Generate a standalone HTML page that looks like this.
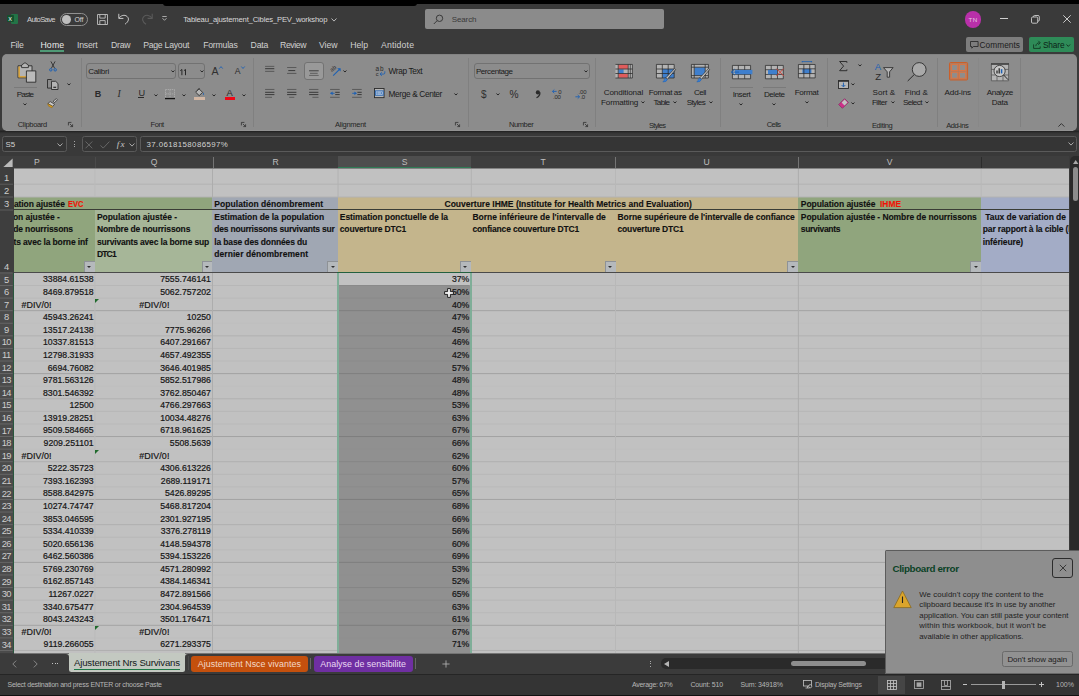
<!DOCTYPE html>
<html><head><meta charset="utf-8"><title>Excel</title>
<style>
*{box-sizing:border-box;margin:0;padding:0}
html,body{width:1079px;height:696px;overflow:hidden;background:#3a3a3a;font-family:"Liberation Sans",sans-serif;}
body{position:relative;color:#d6d6d6;font-size:8.5px}
.a{position:absolute}
.t{position:absolute;white-space:nowrap;line-height:1}
.b{-webkit-text-stroke:0.22px #151515}
svg{position:absolute;overflow:visible}
.cell{position:absolute;white-space:nowrap;font-size:8.6px;line-height:12.6px;color:#151515}
.rh{position:absolute;left:0;width:13px;text-align:center;font-size:9.4px;line-height:12.6px;color:#cdcdcd;letter-spacing:-0.55px;text-indent:-0.5px}
.hd{position:absolute;font-weight:bold;font-size:8.55px;line-height:12.6px;color:#111;white-space:nowrap;overflow:hidden;letter-spacing:-0.1px}
.fb{position:absolute;width:10.7px;height:10.9px;background:#b5b9bc;border-top:1px solid #8e9296;border-left:1px solid #8e9296}
.fb:after{content:"";position:absolute;left:2.6px;top:4px;border-left:2px solid transparent;border-right:2px solid transparent;border-top:2.5px solid #303030}
</style></head><body>

<div class="a" style="left:0px;top:0px;width:1079.00px;height:4.00px;background:#000;"></div>
<div class="a" style="left:163px;top:0px;width:254.00px;height:6.00px;background:#000;border-radius:0 0 3px 3px"></div>
<div class="a" style="left:10.5px;top:13.6px;width:7.10px;height:10.00px;background:#237447;border-radius:1px"></div>
<div class="a" style="left:7px;top:15.2px;width:6.60px;height:7.00px;background:#15502d;border-radius:1px"></div>
<div class="t" style="left:8.30px;top:17.00px;font-size:5.6px;color:#c9d6ce;font-weight:bold;">X</div>
<div class="t" style="left:27.00px;top:16.00px;font-size:7.6px;color:#d2d2d2;letter-spacing:-0.620px;">AutoSave</div>
<div class="a" style="left:60px;top:12.6px;width:28px;height:13px;border:1px solid #909090;border-radius:6.5px"></div>
<div class="a" style="left:62.2px;top:14.5px;width:9.2px;height:9.2px;border-radius:5px;background:#bebebe"></div>
<div class="t" style="left:74.50px;top:16.00px;font-size:7.0px;color:#d2d2d2;letter-spacing:-0.159px;">Off</div>
<svg style="left:97px;top:13.5px" width="11" height="11" viewBox="0 0 11 11" fill="none" stroke="#c0c0c0" stroke-width="0.9"><path d="M0.5 0.5h10v10H0.5z"/><path d="M2.8 0.5v3.6h5.4V0.5"/><path d="M2.8 10.5V6.6h5.4v3.9"/></svg>
<svg style="left:118px;top:13.2px" width="12" height="12" viewBox="0 0 12 12" fill="none" stroke="#c6c6c6" stroke-width="1.0"><path d="M0.8 0.8v4.6H5.4"/><path d="M1 5.2C3 2.2 6.6 1.4 9 3.4c2.4 2 1.8 5.2-2 7.8"/></svg>
<svg style="left:140.5px;top:13.2px" width="12" height="12" viewBox="0 0 12 12" fill="none" stroke="#5a5a5a" stroke-width="1.1"><path d="M11.2 0.8v4.6H6.6"/><path d="M11 5.2C9 2.2 5.4 1.4 3 3.4c-2.4 2-1.8 5.2 2 7.8"/></svg>
<svg style="left:162px;top:16.3px" width="5" height="5" viewBox="0 0 5 5" fill="none" stroke="#bdbdbd" stroke-width="0.85"><path d="M0.3 0.5h4.4"/><path d="M0.5 2.2L2.5 4.3 4.5 2.2"/></svg>
<div class="t" style="left:183.20px;top:16.00px;font-size:7.7px;color:#d8d8d8;letter-spacing:-0.189px;">Tableau_ajustement_Cibles_PEV_workshop</div>
<svg style="left:330.50px;top:17.80px" width="6" height="3.6" viewBox="0 0 6 3.6" fill="none" stroke="#cfcfcf" stroke-width="0.85"><path d="M0.5 0.5L3.0 3.1 5.5 0.5"/></svg>
<div class="a" style="left:425px;top:9px;width:239.30px;height:20.30px;background:#8b8b8b;border-radius:2px"></div>
<svg style="left:433px;top:13.6px" width="11" height="11" viewBox="0 0 11 11" fill="none" stroke="#3a3a3a" stroke-width="1"><circle cx="6.5" cy="4.3" r="3.2"/><path d="M4.2 6.6L0.8 10"/></svg>
<div class="t" style="left:451.70px;top:16.00px;font-size:8.0px;color:#3a3a3a;letter-spacing:-0.112px;">Search</div>
<div class="a" style="left:964.6px;top:11.2px;width:16.40px;height:16.40px;background:#b930a9;border-radius:9px"></div>
<div class="t" style="left:968.60px;top:17.00px;font-size:6.2px;color:#e3c5e0;letter-spacing:0.350px;">TN</div>
<div class="a" style="left:1000px;top:18px;width:8.00px;height:1.00px;background:#cfcfcf;"></div>
<svg style="left:1031px;top:15px" width="9" height="9" viewBox="0 0 9 9" fill="none" stroke="#cfcfcf" stroke-width="0.9"><rect x="0.5" y="2" width="6.2" height="6.2" rx="1.2"/><path d="M2.4 2V1.7q0-1.2 1.2-1.2H7q1.3 0 1.3 1.2V5q0 1.2-1.2 1.2"/></svg>
<svg style="left:1063px;top:15.3px" width="8" height="8" viewBox="0 0 8 8" fill="none" stroke="#dadada" stroke-width="0.9"><path d="M0.3 0.3l7.4 7.4M7.7 0.3L0.3 7.7"/></svg>
<div class="t" style="left:10.50px;top:41.00px;font-size:8.7px;color:#d0d0d0;letter-spacing:-0.233px;">File</div>
<div class="t" style="left:40.40px;top:41.00px;font-size:8.7px;color:#ececec;letter-spacing:0.204px;">Home</div>
<div class="t" style="left:77.00px;top:41.00px;font-size:8.7px;color:#d0d0d0;letter-spacing:-0.227px;">Insert</div>
<div class="t" style="left:111.00px;top:41.00px;font-size:8.7px;color:#d0d0d0;letter-spacing:-0.227px;">Draw</div>
<div class="t" style="left:143.20px;top:41.00px;font-size:8.7px;color:#d0d0d0;letter-spacing:-0.260px;">Page Layout</div>
<div class="t" style="left:203.20px;top:41.00px;font-size:8.7px;color:#d0d0d0;letter-spacing:-0.231px;">Formulas</div>
<div class="t" style="left:250.60px;top:41.00px;font-size:8.7px;color:#d0d0d0;letter-spacing:-0.186px;">Data</div>
<div class="t" style="left:280.00px;top:41.00px;font-size:8.7px;color:#d0d0d0;letter-spacing:-0.380px;">Review</div>
<div class="t" style="left:319.00px;top:41.00px;font-size:8.7px;color:#d0d0d0;letter-spacing:-0.029px;">View</div>
<div class="t" style="left:350.20px;top:41.00px;font-size:8.7px;color:#d0d0d0;letter-spacing:-0.025px;">Help</div>
<div class="t" style="left:381.00px;top:41.00px;font-size:8.7px;color:#d0d0d0;letter-spacing:0.158px;">Antidote</div>
<div class="a" style="left:40.4px;top:50.4px;width:24.00px;height:1.50px;background:#4f9a76;"></div>
<div class="a" style="left:966.3px;top:36.8px;width:57.20px;height:15.00px;background:#7d7d7d;border-radius:2px"></div>
<svg style="left:970.3px;top:40.8px" width="9" height="8" viewBox="0 0 9 8" fill="none" stroke="#222" stroke-width="0.8"><path d="M0.5 0.5h7.6v5H3.4L1.8 7.2V5.5H0.5z"/></svg>
<div class="t" style="left:979.60px;top:41.00px;font-size:8.3px;color:#1c1c1c;letter-spacing:0.039px;">Comments</div>
<div class="a" style="left:1029px;top:36.8px;width:45.00px;height:15.00px;background:#2e8b58;border-radius:2px"></div>
<svg style="left:1032.6px;top:40.2px" width="9" height="9" viewBox="0 0 9 9" fill="none" stroke="#0f2e1c" stroke-width="0.8"><path d="M0.6 4.4v4h6.6v-2"/><path d="M2.8 6.2c.2-2.4 1.8-3.4 3.8-3.4"/><path d="M5.3 0.8l2 2-2 2"/></svg>
<div class="t" style="left:1043.00px;top:41.00px;font-size:8.3px;color:#0c2417;letter-spacing:-0.160px;">Share</div>
<svg style="left:1066.30px;top:43.85px" width="4.6" height="2.9" viewBox="0 0 4.6 2.9" fill="none" stroke="#0c2417" stroke-width="0.8"><path d="M0.5 0.5L2.3 2.4 4.1 0.5"/></svg>
<div class="a" style="left:0px;top:130px;width:1079.00px;height:4.00px;background:#2e2e2e;"></div>
<div class="a" style="left:2px;top:54px;width:1074.60px;height:77.00px;background:#8c8c8c;border-radius:5px"></div>
<div class="a" style="left:6px;top:54px;width:1066.60px;height:1.00px;background:#838383;"></div>
<div class="a" style="left:6px;top:130px;width:1066.60px;height:1.00px;background:#929292;"></div>
<div class="a" style="left:80.9px;top:57.5px;width:1.00px;height:69.10px;background:#808080;"></div>
<div class="a" style="left:253.3px;top:57.5px;width:1.00px;height:69.10px;background:#808080;"></div>
<div class="a" style="left:467.7px;top:57.5px;width:1.00px;height:69.10px;background:#808080;"></div>
<div class="a" style="left:595.1px;top:57.5px;width:1.00px;height:69.10px;background:#808080;"></div>
<div class="a" style="left:720.1px;top:57.5px;width:1.00px;height:69.10px;background:#808080;"></div>
<div class="a" style="left:827.0px;top:57.5px;width:1.00px;height:69.10px;background:#808080;"></div>
<div class="a" style="left:937.2px;top:57.5px;width:1.00px;height:69.10px;background:#808080;"></div>
<div class="a" style="left:1019.9px;top:57.5px;width:1.00px;height:69.10px;background:#808080;"></div>
<div class="a" style="left:978px;top:57.5px;width:1.00px;height:69.10px;background:#888888;"></div>
<svg style="left:17px;top:61.5px" width="20" height="21" viewBox="0 0 20 21" ><path d="M1 3.8h14v12H1z" fill="#b4b4b4" stroke="#2a2a2a" stroke-width="0.9"/><path d="M2.1 4.6V14.9H9" fill="none" stroke="#e1a021" stroke-width="1.3"/><path d="M4.6 5.6V3L8 0.7 11.4 3v2.6z" fill="#b4b4b4" stroke="#2a2a2a" stroke-width="0.85"/><path d="M9.4 8.9h9.4v11.3H9.4z" fill="#bababa" stroke="#2a2a2a" stroke-width="0.9"/></svg>
<div class="a" style="left:14.1px;top:87.1px;width:22.70px;height:0.80px;background:#7a7a7a;"></div>
<div class="t" style="left:16.80px;top:91.00px;font-size:8.1px;color:#1b1b1b;letter-spacing:-0.851px;">Paste</div>
<svg style="left:23.05px;top:102.82px" width="3.9" height="2.55" viewBox="0 0 3.9 2.55" fill="none" stroke="#1f1f1f" stroke-width="0.95"><path d="M0.5 0.5L1.95 2.05 3.4 0.5"/></svg>
<svg style="left:48.6px;top:60.8px" width="8" height="11" viewBox="0 0 8 11" ><path d="M1.9 0.4L5.6 7.2M6.1 0.4L2.4 7.2" stroke="#2a2a2a" stroke-width="0.85" fill="none"/><circle cx="1.8" cy="8.8" r="1.25" fill="none" stroke="#1d61b4" stroke-width="1"/><circle cx="6.2" cy="8.8" r="1.25" fill="none" stroke="#1d61b4" stroke-width="1"/></svg>
<svg style="left:46.8px;top:78.8px" width="12" height="11" viewBox="0 0 12 11" ><path d="M4.4 1.2V0.5H0.5v8.6h3.6" fill="none" stroke="#2a2a2a" stroke-width="0.9"/><path d="M4.5 2.3h4.2l2.3 2.3v5.9H4.5z" fill="#b4b4b4" stroke="#2a2a2a" stroke-width="0.9"/><path d="M6.3 8.3h2.9" stroke="#2a2a2a" stroke-width="1.2"/></svg>
<svg style="left:66.95px;top:83.22px" width="3.9" height="2.55" viewBox="0 0 3.9 2.55" fill="none" stroke="#1f1f1f" stroke-width="0.95"><path d="M0.5 0.5L1.95 2.05 3.4 0.5"/></svg>
<svg style="left:47.4px;top:97.6px" width="11" height="10" viewBox="0 0 11 10" ><path d="M6.2 3.2L9.4 0.6l1 1.2L7.6 4.6z" fill="#c6c6c6" stroke="#2a2a2a" stroke-width="0.7"/><path d="M3.2 3.6l4.3 2.6-1.6 2.2L0.9 5.6z" fill="#c9c9c9" stroke="#2a2a2a" stroke-width="0.7"/><path d="M0.6 5.7l5.2 2.9-0.9 1.2L1.6 8.2z" fill="#e0a01f" stroke="#8a6414" stroke-width="0.5"/></svg>
<div class="t" style="left:17.80px;top:121.00px;font-size:7.5px;color:#252525;letter-spacing:-0.351px;">Clipboard</div>
<svg style="left:68.2px;top:122.3px" width="5" height="5" viewBox="0 0 5 5" fill="none" stroke="#2a2a2a" stroke-width="0.75"><path d="M0.4 3.4V0.4H3.4"/><path d="M1.9 1.9L4.5 4.5M4.6 2.3V4.6H2.3"/></svg>
<div class="a" style="left:86.4px;top:63.3px;width:89.80px;height:15.80px;background:transparent;border:1px solid #727272;border-radius:3px"></div>
<div class="t" style="left:88.20px;top:68.00px;font-size:8.0px;color:#1b1b1b;letter-spacing:-0.279px;">Calibri</div>
<svg style="left:170.65px;top:70.12px" width="3.9" height="2.55" viewBox="0 0 3.9 2.55" fill="none" stroke="#1f1f1f" stroke-width="0.95"><path d="M0.5 0.5L1.95 2.05 3.4 0.5"/></svg>
<div class="a" style="left:178.2px;top:63.3px;width:27.30px;height:15.80px;background:transparent;border:1px solid #727272;border-radius:3px"></div>
<svg style="left:180.4px;top:68.6px" width="7" height="6.4" viewBox="0 0 7 6.4" ><path d="M0.3 1.7L1.9 0.5V6.2M3.9 1.7L5.5 0.5V6.2" fill="none" stroke="#1b1b1b" stroke-width="0.9"/></svg>
<svg style="left:199.95px;top:70.12px" width="3.9" height="2.55" viewBox="0 0 3.9 2.55" fill="none" stroke="#1f1f1f" stroke-width="0.95"><path d="M0.5 0.5L1.95 2.05 3.4 0.5"/></svg>
<div class="t" style="left:211.60px;top:66.00px;font-size:10.6px;color:#303030;letter-spacing:0.522px;">A</div>
<svg style="left:219.2px;top:65.6px" width="4" height="3" viewBox="0 0 4 3" ><path d="M0.3 2.6L2 0.6 3.7 2.6" fill="none" stroke="#1d61b4" stroke-width="0.9"/></svg>
<div class="t" style="left:234.80px;top:67.00px;font-size:8.6px;color:#2a2a2a;letter-spacing:0.666px;">A</div>
<svg style="left:241.2px;top:65.9px" width="4" height="3" viewBox="0 0 4 3" ><path d="M0.3 0.5L2 2.5 3.7 0.5" fill="none" stroke="#1d61b4" stroke-width="0.9"/></svg>
<div class="t" style="left:94.70px;top:90.00px;font-size:9.0px;color:#2a2a2a;letter-spacing:-1.300px;font-weight:bold;">B</div>
<div class="t" style="left:117.40px;top:89.00px;font-size:9.6px;color:#2a2a2a;letter-spacing:0.997px;font-family:'Liberation Serif',serif;font-style:italic;">I</div>
<div class="t" style="left:138.40px;top:89.00px;font-size:9.2px;color:#2a2a2a;letter-spacing:-0.841px;">U</div>
<div class="a" style="left:138.2px;top:97.3px;width:6.20px;height:0.80px;background:#2a2a2a;"></div>
<svg style="left:153.95px;top:93.72px" width="3.9" height="2.55" viewBox="0 0 3.9 2.55" fill="none" stroke="#1f1f1f" stroke-width="0.95"><path d="M0.5 0.5L1.95 2.05 3.4 0.5"/></svg>
<svg style="left:165px;top:88.6px" width="10" height="10.4" viewBox="0 0 10 10.4" ><path d="M0.5 0.5h9M0.5 4.9h9M0.5 0.5v8.6M5 0.5v8.6M9.5 0.5v8.6" stroke="#a9a9a9" stroke-width="1" stroke-dasharray="1.4 0.7" fill="none"/><path d="M0 9.6h10" stroke="#111" stroke-width="1.3"/></svg>
<svg style="left:182.35px;top:93.52px" width="3.9" height="2.55" viewBox="0 0 3.9 2.55" fill="none" stroke="#1f1f1f" stroke-width="0.95"><path d="M0.5 0.5L1.95 2.05 3.4 0.5"/></svg>
<svg style="left:195.4px;top:88.4px" width="10" height="9" viewBox="0 0 10 9" ><path d="M3.8 0.6L7.6 4.4 4.2 7.6 0.7 4.2z" fill="#b4b4b4" stroke="#2a2a2a" stroke-width="0.85"/><path d="M2.2 2.6L4.6 0.4" stroke="#2a2a2a" stroke-width="0.8"/><path d="M8.4 4.6q1.2 1.8 0 2.6-1.2-.8 0-2.6z" fill="#1d61b4"/></svg>
<div class="a" style="left:194.3px;top:97.1px;width:10.80px;height:2.60px;background:#d2b6a3;"></div>
<svg style="left:211.65px;top:93.52px" width="3.9" height="2.55" viewBox="0 0 3.9 2.55" fill="none" stroke="#1f1f1f" stroke-width="0.95"><path d="M0.5 0.5L1.95 2.05 3.4 0.5"/></svg>
<div class="t" style="left:226.60px;top:88.00px;font-size:9.4px;color:#2a2a2a;letter-spacing:0.934px;">A</div>
<div class="a" style="left:225px;top:97.1px;width:10.20px;height:2.60px;background:#ef0716;"></div>
<svg style="left:242.35px;top:93.52px" width="3.9" height="2.55" viewBox="0 0 3.9 2.55" fill="none" stroke="#1f1f1f" stroke-width="0.95"><path d="M0.5 0.5L1.95 2.05 3.4 0.5"/></svg>
<div class="t" style="left:150.60px;top:121.00px;font-size:7.5px;color:#252525;letter-spacing:-0.472px;">Font</div>
<svg style="left:241.0px;top:122.3px" width="5" height="5" viewBox="0 0 5 5" fill="none" stroke="#2a2a2a" stroke-width="0.75"><path d="M0.4 3.4V0.4H3.4"/><path d="M1.9 1.9L4.5 4.5M4.6 2.3V4.6H2.3"/></svg>
<svg style="left:265px;top:64px" width="12" height="12" viewBox="0 0 12 12" fill="none"><path d="M0.1 2.4H9.3" stroke="#323232" stroke-width="0.55"/><path d="M0.1 4.7H9.3" stroke="#000000" stroke-width="0.6"/><path d="M0.1 7.35H9.3" stroke="#2a2a2a" stroke-width="0.55"/></svg>
<svg style="left:287.2px;top:64px" width="12" height="12" viewBox="0 0 12 12" fill="none"><path d="M0.1 3.5H9.4" stroke="#323232" stroke-width="0.55"/><path d="M1.3 6.6H8.2" stroke="#000000" stroke-width="0.6"/><path d="M0.1 9.4H9.4" stroke="#2a2a2a" stroke-width="0.55"/></svg>
<div class="a" style="left:303.8px;top:62.3px;width:20.20px;height:17.40px;background:#999999;border:1px solid #727272;border-radius:3px"></div>
<svg style="left:309.3px;top:64px" width="12" height="12" viewBox="0 0 12 12" fill="none"><path d="M0.1 6.8H9.7" stroke="#000000" stroke-width="0.6"/><path d="M1 9.3H8.7" stroke="#2a2a2a" stroke-width="0.55"/><path d="M0.1 11.4H9.7" stroke="#323232" stroke-width="0.55"/></svg>
<svg style="left:329.6px;top:64.6px" width="12" height="12" viewBox="0 0 12 12" ><text x="0.3" y="5.6" font-family="Liberation Sans" font-size="5.6" fill="#2a2a2a" transform="rotate(-38 3 4)">ab</text><path d="M3.2 10.6L10 3.8" stroke="#1d61b4" stroke-width="1.1"/><path d="M7.2 3.2h3.4v3.4z" fill="#1d61b4"/></svg>
<svg style="left:343.45px;top:69.82px" width="3.9" height="2.55" viewBox="0 0 3.9 2.55" fill="none" stroke="#1f1f1f" stroke-width="0.95"><path d="M0.5 0.5L1.95 2.05 3.4 0.5"/></svg>
<svg style="left:265.1px;top:86px" width="12" height="12" viewBox="0 0 12 12" fill="none"><path d="M0.1 3.45H9.4" stroke="#323232" stroke-width="0.55"/><path d="M0.1 6.3H9.4" stroke="#000000" stroke-width="0.6"/><path d="M0.1 8.6H9.4" stroke="#000000" stroke-width="0.6"/><path d="M0.1 11.3H7" stroke="#323232" stroke-width="0.55"/></svg>
<svg style="left:287.2px;top:86px" width="12" height="12" viewBox="0 0 12 12" fill="none"><path d="M0.1 3.45H9.4" stroke="#323232" stroke-width="0.55"/><path d="M0.1 6.3H9.4" stroke="#000000" stroke-width="0.6"/><path d="M0.1 8.6H9.4" stroke="#000000" stroke-width="0.6"/><path d="M2.2 11.3H7.3" stroke="#323232" stroke-width="0.55"/></svg>
<svg style="left:309.3px;top:86px" width="12" height="12" viewBox="0 0 12 12" fill="none"><path d="M0.1 3.45H9.4" stroke="#323232" stroke-width="0.55"/><path d="M0.1 6.3H9.4" stroke="#000000" stroke-width="0.6"/><path d="M0.1 8.6H9.4" stroke="#000000" stroke-width="0.6"/><path d="M3.4 11.3H9.5" stroke="#323232" stroke-width="0.55"/></svg>
<svg style="left:330px;top:86px" width="10" height="12" viewBox="0 0 10 12" fill="none"><path d="M0.1 3.45H9.7M0.1 11.3H9.7" stroke="#323232" stroke-width="0.55"/><path d="M5.2 6.3H9.7M5.2 8.6H9.7" stroke="#000000" stroke-width="0.6"/><path d="M0.4 7.3H4.6" stroke="#1d61b4" stroke-width="0.9"/><path d="M0.2 7.3L2.6 5.4V9.2z" fill="#1d61b4"/></svg>
<svg style="left:352.3px;top:86px" width="10" height="12" viewBox="0 0 10 12" fill="none"><path d="M0.1 3.45H9.7M0.1 11.3H9.7" stroke="#323232" stroke-width="0.55"/><path d="M5.4 6.3H9.7M5.4 8.6H9.7" stroke="#000000" stroke-width="0.6"/><path d="M0.2 7.3H4.4" stroke="#1d61b4" stroke-width="0.9"/><path d="M4.8 7.3L2.4 5.4V9.2z" fill="#1d61b4"/></svg>
<div class="t" style="left:375.40px;top:66.00px;font-size:6.4px;color:#2a2a2a;letter-spacing:1.091px;">ab</div>
<div class="t" style="left:375.80px;top:72.00px;font-size:5.6px;color:#2a2a2a;">c</div>
<svg style="left:378.6px;top:71.4px" width="7" height="5" viewBox="0 0 7 5" ><path d="M5.8 0.3v1.6q0 1.2-1.3 1.2H1.2" fill="none" stroke="#1d61b4" stroke-width="0.9"/><path d="M2.8 1.4L1 3.1 2.8 4.8" fill="none" stroke="#1d61b4" stroke-width="0.9"/></svg>
<div class="t" style="left:388.50px;top:67.00px;font-size:8.3px;color:#1b1b1b;letter-spacing:-0.381px;">Wrap Text</div>
<svg style="left:374px;top:88px" width="11" height="10" viewBox="0 0 11 10" ><rect x="0.45" y="0.45" width="9.6" height="9.2" fill="#b6b6b6" stroke="#2a2a2a" stroke-width="0.9"/><rect x="1.3" y="2.9" width="7.9" height="4.3" fill="#c3cede" stroke="#1d61b4" stroke-width="0.9"/><path d="M2.6 5.05H7.9M3.6 4.1L2.6 5.05 3.6 6M6.9 4.1L7.9 5.05 6.9 6" stroke="#1d61b4" stroke-width="0.6" fill="none"/></svg>
<div class="t" style="left:388.50px;top:90.00px;font-size:8.3px;color:#1b1b1b;letter-spacing:-0.360px;">Merge &amp; Center</div>
<svg style="left:453.95px;top:92.52px" width="3.9" height="2.55" viewBox="0 0 3.9 2.55" fill="none" stroke="#1f1f1f" stroke-width="0.95"><path d="M0.5 0.5L1.95 2.05 3.4 0.5"/></svg>
<div class="t" style="left:335.00px;top:121.00px;font-size:7.5px;color:#252525;letter-spacing:-0.270px;">Alignment</div>
<svg style="left:455.2px;top:122.3px" width="5" height="5" viewBox="0 0 5 5" fill="none" stroke="#2a2a2a" stroke-width="0.75"><path d="M0.4 3.4V0.4H3.4"/><path d="M1.9 1.9L4.5 4.5M4.6 2.3V4.6H2.3"/></svg>
<div class="a" style="left:474.1px;top:63.3px;width:115.90px;height:15.70px;background:transparent;border:1px solid #727272;border-radius:3px"></div>
<div class="t" style="left:475.90px;top:68.00px;font-size:8.0px;color:#1b1b1b;letter-spacing:-0.425px;">Percentage</div>
<svg style="left:584.25px;top:70.32px" width="3.9" height="2.55" viewBox="0 0 3.9 2.55" fill="none" stroke="#1f1f1f" stroke-width="0.95"><path d="M0.5 0.5L1.95 2.05 3.4 0.5"/></svg>
<div class="t" style="left:481.00px;top:90.00px;font-size:10.0px;color:#303030;letter-spacing:-0.163px;">$</div>
<svg style="left:496.35px;top:93.32px" width="3.9" height="2.55" viewBox="0 0 3.9 2.55" fill="none" stroke="#1f1f1f" stroke-width="0.95"><path d="M0.5 0.5L1.95 2.05 3.4 0.5"/></svg>
<div class="t" style="left:509.60px;top:90.00px;font-size:10.2px;color:#2a2a2a;letter-spacing:1.137px;">%</div>
<svg style="left:534.5px;top:90px" width="6" height="9" viewBox="0 0 6 9" ><circle cx="2.9" cy="2.4" r="2.1" fill="#2a2a2a"/><path d="M4.9 2.2q.4 3.6-3.4 5.6" fill="none" stroke="#2a2a2a" stroke-width="1.2"/></svg>
<svg style="left:552.2px;top:89.2px" width="11" height="11" viewBox="0 0 11 11" ><path d="M0.6 2.4H4.6M0.4 2.4L2.3 0.6M0.4 2.4L2.3 4.2" stroke="#1d61b4" stroke-width="0.9" fill="none"/><text x="6.2" y="4.6" font-family="Liberation Sans" font-size="6" fill="#2a2a2a">0</text><text x="1.0" y="10" font-family="Liberation Sans" font-size="6" fill="#2a2a2a" letter-spacing="-0.2">.00</text></svg>
<svg style="left:574.6px;top:89.2px" width="11" height="11" viewBox="0 0 11 11" ><path d="M0.4 7.8H4.4M4.6 7.8L2.7 6M4.6 7.8L2.7 9.6" stroke="#1d61b4" stroke-width="0.9" fill="none"/><text x="3.6" y="4.6" font-family="Liberation Sans" font-size="6" fill="#2a2a2a" letter-spacing="-0.2">.00</text><text x="5.4" y="10" font-family="Liberation Sans" font-size="6" fill="#2a2a2a" letter-spacing="-0.2">.0</text></svg>
<div class="t" style="left:508.90px;top:121.00px;font-size:7.5px;color:#252525;letter-spacing:-0.377px;">Number</div>
<svg style="left:582.6px;top:122.3px" width="5" height="5" viewBox="0 0 5 5" fill="none" stroke="#2a2a2a" stroke-width="0.75"><path d="M0.4 3.4V0.4H3.4"/><path d="M1.9 1.9L4.5 4.5M4.6 2.3V4.6H2.3"/></svg>
<svg style="left:615px;top:64.4px" width="18" height="14.5" viewBox="0 0 18 14.5" fill="none"><rect x="0.4" y="0.4" width="17" height="13.6" fill="#b4b4b4"/><rect x="3.4" y="0.6" width="9.6" height="4.3" fill="#df5c5c"/><rect x="3.4" y="5.4" width="5.2" height="4" fill="#3f7fcd"/><rect x="3.4" y="9.8" width="9.4" height="4" fill="#df5c5c"/><path d="M0.4 0.4H17.4M0.4 5H17.4M0.4 9.5H17.4M0.4 14H17.4" stroke="#2a2a2a" stroke-width="0.75"/><path d="M3.2 0.4V14M13.2 0.4V14M17.4 0.4V14M15.3 0.4V14" stroke="#2a2a2a" stroke-width="0.7"/></svg>
<div class="t" style="left:603.70px;top:89.00px;font-size:8.1px;color:#1b1b1b;letter-spacing:-0.100px;">Conditional</div>
<div class="t" style="left:601.00px;top:99.00px;font-size:8.1px;color:#1b1b1b;letter-spacing:-0.154px;">Formatting</div>
<svg style="left:641.45px;top:101.12px" width="3.9" height="2.55" viewBox="0 0 3.9 2.55" fill="none" stroke="#1f1f1f" stroke-width="0.95"><path d="M0.5 0.5L1.95 2.05 3.4 0.5"/></svg>
<svg style="left:656.3px;top:64.4px" width="19" height="15" viewBox="0 0 19 15" fill="none"><rect x="0.4" y="0.4" width="17.8" height="13.6" fill="#b4b4b4"/><rect x="6.4" y="5" width="11.8" height="9" fill="#3f7fcd"/><path d="M0.4 0.4H18.2M0.4 5H18.2M0.4 9.5H18.2M0.4 14H18.2" stroke="#2a2a2a" stroke-width="0.75"/><path d="M0.4 0.4V14M6.3 0.4V14M12.2 0.4V14M18.2 0.4V14" stroke="#2a2a2a" stroke-width="0.75"/></svg>
<svg style="left:662px;top:67.6px" width="14" height="15" viewBox="0 0 14 15" ><path d="M12.6 0.6l1 1L5.4 11.2 3.6 10z" fill="#c4c4c4" stroke="#2a2a2a" stroke-width="0.7"/><path d="M3.8 10.2l1.6 1.2q-.6 2.6-4.6 2.6 1.4-1 1.4-2.6.4-1.2 1.6-1.2z" fill="#3f7fcd" stroke="#1d61b4" stroke-width="0.5"/></svg>
<div class="t" style="left:648.80px;top:89.00px;font-size:8.1px;color:#1b1b1b;letter-spacing:-0.405px;">Format as</div>
<div class="t" style="left:653.50px;top:99.00px;font-size:8.1px;color:#1b1b1b;letter-spacing:-0.690px;">Table</div>
<svg style="left:672.95px;top:101.12px" width="3.9" height="2.55" viewBox="0 0 3.9 2.55" fill="none" stroke="#1f1f1f" stroke-width="0.95"><path d="M0.5 0.5L1.95 2.05 3.4 0.5"/></svg>
<svg style="left:691.3px;top:64.4px" width="18" height="15" viewBox="0 0 18 15" fill="none"><rect x="0.4" y="0.4" width="17" height="13.6" fill="#b4b4b4"/><rect x="3.4" y="3.4" width="10.6" height="8" fill="#3f7fcd"/><path d="M0.4 0.4H17.4M0.4 3.2H17.4M0.4 11.6H17.4M0.4 14H17.4" stroke="#2a2a2a" stroke-width="0.75"/><path d="M0.4 0.4V14M3.2 0.4V14M14.2 0.4V14M17.4 0.4V14" stroke="#2a2a2a" stroke-width="0.75"/></svg>
<svg style="left:696.4px;top:67.6px" width="14" height="15" viewBox="0 0 14 15" ><path d="M12.6 0.6l1 1L5.4 11.2 3.6 10z" fill="#c4c4c4" stroke="#2a2a2a" stroke-width="0.7"/><path d="M3.8 10.2l1.6 1.2q-.6 2.6-4.6 2.6 1.4-1 1.4-2.6.4-1.2 1.6-1.2z" fill="#3f7fcd" stroke="#1d61b4" stroke-width="0.5"/></svg>
<div class="t" style="left:693.90px;top:89.00px;font-size:8.1px;color:#1b1b1b;letter-spacing:-0.518px;">Cell</div>
<div class="t" style="left:686.70px;top:99.00px;font-size:8.1px;color:#1b1b1b;letter-spacing:-0.609px;">Styles</div>
<svg style="left:708.55px;top:101.12px" width="3.9" height="2.55" viewBox="0 0 3.9 2.55" fill="none" stroke="#1f1f1f" stroke-width="0.95"><path d="M0.5 0.5L1.95 2.05 3.4 0.5"/></svg>
<div class="t" style="left:649.00px;top:122.00px;font-size:7.5px;color:#252525;letter-spacing:-0.688px;">Styles</div>
<svg style="left:732px;top:64.5px" width="21" height="14.2" viewBox="0 0 21 14.2" fill="none"><rect x="0.4" y="0.4" width="18.2" height="13.399999999999999" fill="#b4b4b4"/><path d="M0.4 0.4H18.6M0.4 4.73H18.6M0.4 9.47H18.6M0.4 13.799999999999999H18.6M0.4 0.4V13.799999999999999M6.33 0.4V13.799999999999999M12.67 0.4V13.799999999999999M18.6 0.4V13.799999999999999" stroke="#2a2a2a" stroke-width="0.75"/><rect x="3" y="4.9" width="17.4" height="4.4" fill="#3f7fcd"/><path d="M-0.6 7.1H7" stroke="#1d61b4" stroke-width="1"/><path d="M2.6 4.2L-0.6 7.1 2.6 10" stroke="#1d61b4" stroke-width="1" fill="none"/></svg>
<div class="a" style="left:730.2px;top:86.8px;width:22.70px;height:0.80px;background:#7a7a7a;"></div>
<div class="t" style="left:732.70px;top:91.00px;font-size:8.1px;color:#1b1b1b;letter-spacing:-0.430px;">Insert</div>
<svg style="left:739.35px;top:103.32px" width="3.9" height="2.55" viewBox="0 0 3.9 2.55" fill="none" stroke="#1f1f1f" stroke-width="0.95"><path d="M0.5 0.5L1.95 2.05 3.4 0.5"/></svg>
<svg style="left:765.1px;top:64.5px" width="20" height="14.2" viewBox="0 0 20 14.2" fill="none"><rect x="0.4" y="0.4" width="17.9" height="13.399999999999999" fill="#b4b4b4"/><path d="M0.4 0.4H18.3M0.4 4.73H18.3M0.4 9.47H18.3M0.4 13.799999999999999H18.3M0.4 0.4V13.799999999999999M6.23 0.4V13.799999999999999M12.47 0.4V13.799999999999999M18.3 0.4V13.799999999999999" stroke="#2a2a2a" stroke-width="0.75"/><rect x="3" y="4.9" width="9" height="4.4" fill="#3f7fcd"/><path d="M11.4 3.6L18.8 11M18.8 3.6L11.4 11" stroke="#d0443c" stroke-width="1"/></svg>
<div class="a" style="left:763.1px;top:86.8px;width:22.70px;height:0.80px;background:#7a7a7a;"></div>
<div class="t" style="left:763.90px;top:91.00px;font-size:8.1px;color:#1b1b1b;letter-spacing:-0.461px;">Delete</div>
<svg style="left:771.95px;top:103.32px" width="3.9" height="2.55" viewBox="0 0 3.9 2.55" fill="none" stroke="#1f1f1f" stroke-width="0.95"><path d="M0.5 0.5L1.95 2.05 3.4 0.5"/></svg>
<svg style="left:798.1px;top:61.4px" width="18" height="17.4" viewBox="0 0 18 17.4" fill="none"><path d="M4 0.6H13.8M4.2 0V1.3M13.6 0V1.3" stroke="#1d61b4" stroke-width="0.8"/><g transform="translate(0 3.1)"><rect x="0.4" y="0.4" width="16.8" height="13.399999999999999" fill="#b4b4b4"/><rect x="4.4" y="4.8" width="9" height="4.6" fill="#3f7fcd"/><path d="M0.4 0.4H17.200000000000003M0.4 4.73H17.200000000000003M0.4 9.47H17.200000000000003M0.4 13.799999999999999H17.200000000000003M0.4 0.4V13.799999999999999M5.87 0.4V13.799999999999999M11.73 0.4V13.799999999999999M17.200000000000003 0.4V13.799999999999999" stroke="#2a2a2a" stroke-width="0.75"/></g></svg>
<div class="t" style="left:794.70px;top:89.00px;font-size:8.1px;color:#1b1b1b;letter-spacing:-0.308px;">Format</div>
<svg style="left:804.65px;top:100.72px" width="3.9" height="2.55" viewBox="0 0 3.9 2.55" fill="none" stroke="#1f1f1f" stroke-width="0.95"><path d="M0.5 0.5L1.95 2.05 3.4 0.5"/></svg>
<div class="t" style="left:766.80px;top:121.00px;font-size:7.5px;color:#252525;letter-spacing:-0.618px;">Cells</div>
<svg style="left:839.2px;top:60.8px" width="9" height="10.4" viewBox="0 0 9 10.4" ><path d="M7.9 1.8V0.5H0.6L4.6 5.1 0.6 9.7H7.9V8.4" fill="none" stroke="#2a2a2a" stroke-width="0.95"/></svg>
<svg style="left:857.75px;top:64.42px" width="3.9" height="2.55" viewBox="0 0 3.9 2.55" fill="none" stroke="#1f1f1f" stroke-width="0.95"><path d="M0.5 0.5L1.95 2.05 3.4 0.5"/></svg>
<svg style="left:838px;top:79.7px" width="11" height="9" viewBox="0 0 11 9" ><rect x="0.45" y="0.9" width="10" height="7.6" fill="#b4b4b4" stroke="#2a2a2a" stroke-width="0.9"/><path d="M0 0.9H10.9" stroke="#2a2a2a" stroke-width="1.5"/><path d="M5.45 2.6V6.6M3.6 5L5.45 6.9 7.3 5" fill="none" stroke="#1d61b4" stroke-width="0.95"/></svg>
<svg style="left:851.45px;top:83.42px" width="3.9" height="2.55" viewBox="0 0 3.9 2.55" fill="none" stroke="#1f1f1f" stroke-width="0.95"><path d="M0.5 0.5L1.95 2.05 3.4 0.5"/></svg>
<svg style="left:838px;top:97.6px" width="11" height="11" viewBox="0 0 11 11" ><path d="M6.6 0.7L10.3 4.4 4.4 10.3 0.7 6.6z" fill="#cf2f8a" stroke="#7e1d55" stroke-width="0.6"/><path d="M6.6 1.5L9.5 4.4 6.5 7.4 3.6 4.5z" fill="#c2c2c2"/></svg>
<svg style="left:851.45px;top:101.52px" width="3.9" height="2.55" viewBox="0 0 3.9 2.55" fill="none" stroke="#1f1f1f" stroke-width="0.95"><path d="M0.5 0.5L1.95 2.05 3.4 0.5"/></svg>
<div class="t" style="left:874.80px;top:62.00px;font-size:9.6px;color:#1d61b4;letter-spacing:0.194px;">A</div>
<div class="t" style="left:875.20px;top:72.00px;font-size:9.6px;color:#2a2a2a;letter-spacing:0.325px;">Z</div>
<svg style="left:882.6px;top:67px" width="11" height="11" viewBox="0 0 11 11" ><path d="M0.5 0.6H10.1L6.6 4.8V10.2H4.2V4.8z" fill="#b4b4b4" stroke="#2a2a2a" stroke-width="0.85" stroke-linejoin="round"/></svg>
<div class="t" style="left:872.50px;top:89.00px;font-size:8.1px;color:#1b1b1b;letter-spacing:0.020px;">Sort &amp;</div>
<div class="t" style="left:871.90px;top:99.00px;font-size:8.1px;color:#1b1b1b;letter-spacing:-0.500px;">Filter</div>
<svg style="left:890.75px;top:101.22px" width="3.9" height="2.55" viewBox="0 0 3.9 2.55" fill="none" stroke="#1f1f1f" stroke-width="0.95"><path d="M0.5 0.5L1.95 2.05 3.4 0.5"/></svg>
<svg style="left:906.5px;top:62px" width="20" height="20" viewBox="0 0 20 20" ><circle cx="12.2" cy="7.5" r="6.9" fill="#a9a9a9" stroke="#2a2a2a" stroke-width="0.9"/><path d="M7.2 12.6L0.7 19" stroke="#2a2a2a" stroke-width="1"/></svg>
<div class="t" style="left:904.80px;top:89.00px;font-size:8.1px;color:#1b1b1b;letter-spacing:-0.081px;">Find &amp;</div>
<div class="t" style="left:902.90px;top:99.00px;font-size:8.1px;color:#1b1b1b;letter-spacing:-0.580px;">Select</div>
<svg style="left:925.25px;top:101.22px" width="3.9" height="2.55" viewBox="0 0 3.9 2.55" fill="none" stroke="#1f1f1f" stroke-width="0.95"><path d="M0.5 0.5L1.95 2.05 3.4 0.5"/></svg>
<div class="t" style="left:871.90px;top:122.00px;font-size:7.5px;color:#252525;letter-spacing:-0.356px;">Editing</div>
<svg style="left:948.9px;top:62.3px" width="19.1" height="18.5" viewBox="0 0 19.1 18.5" ><rect x="0.5" y="0.5" width="18.1" height="17.5" rx="1" fill="#b47a5c" stroke="#cb5f29" stroke-width="1"/><rect x="2.5" y="2.6" width="6.3" height="5.9" fill="#8f8d8c" stroke="#de7642" stroke-width="0.9"/><rect x="2.5" y="10.3" width="6.3" height="5.9" fill="#8f8d8c" stroke="#de7642" stroke-width="0.9"/><rect x="10.4" y="2.6" width="6.3" height="5.9" fill="#8f8d8c" stroke="#de7642" stroke-width="0.9"/><rect x="10.4" y="10.3" width="6.3" height="5.9" fill="#8f8d8c" stroke="#de7642" stroke-width="0.9"/></svg>
<div class="t" style="left:944.60px;top:89.00px;font-size:8.1px;color:#1b1b1b;letter-spacing:-0.159px;">Add-ins</div>
<div class="t" style="left:946.30px;top:122.00px;font-size:7.5px;color:#252525;letter-spacing:-0.506px;">Add-ins</div>
<svg style="left:991px;top:62.6px" width="18" height="18.4" viewBox="0 0 18 18.4" fill="none"><rect x="0.4" y="0.6" width="17.2" height="17.2" fill="#b4b4b4"/><path d="M0 1H18" stroke="#2a2a2a" stroke-width="1.4"/><path d="M0.4 6.4H17.6M0.4 12H17.6M0.4 17.8H17.6M0.4 1V17.8M17.6 1V17.8M6 12V17.8M12 12V17.8" stroke="#4a4a4a" stroke-width="0.7"/><circle cx="8.6" cy="8" r="5.6" fill="#c8c8c8" stroke="#2a2a2a" stroke-width="0.8"/><path d="M6 10.4V7.6M8.2 10.4V5.2" stroke="#2a2a2a" stroke-width="1.3"/><path d="M10.6 10.4V6.2" stroke="#1d61b4" stroke-width="1.5"/><path d="M12.6 12L17.2 16.8" stroke="#2a2a2a" stroke-width="1"/></svg>
<div class="t" style="left:986.80px;top:89.00px;font-size:8.1px;color:#1b1b1b;letter-spacing:-0.383px;">Analyze</div>
<div class="t" style="left:991.70px;top:99.00px;font-size:8.1px;color:#1b1b1b;letter-spacing:-0.270px;">Data</div>
<svg style="left:1057.6px;top:122.6px" width="7" height="4" viewBox="0 0 7 4" ><path d="M0.4 3.6L3.4 0.6 6.4 3.6" fill="none" stroke="#2a2a2a" stroke-width="0.9"/></svg>
<div class="a" style="left:0px;top:131px;width:1079.00px;height:25.00px;background:#393939;"></div>
<div class="a" style="left:0;top:131px;width:1079px;height:3.4px;background:linear-gradient(#1b1b1b,#2c2c2c 30%,#393939)"></div>
<div class="a" style="left:2px;top:136px;width:65.00px;height:16.00px;background:#353535;border:1px solid #5a5a5a;border-radius:2.5px"></div>
<div class="t" style="left:5.40px;top:141.00px;font-size:7.9px;color:#d2d2d2;">S5</div>
<svg style="left:57.40px;top:142.50px" width="6" height="3.6" viewBox="0 0 6 3.6" fill="none" stroke="#bdbdbd" stroke-width="0.85"><path d="M0.5 0.5L3.0 3.1 5.5 0.5"/></svg>
<div class="a" style="left:74px;top:141.3px;width:1.00px;height:1.10px;background:#a8a8a8;"></div>
<div class="a" style="left:74px;top:143.8px;width:1.00px;height:1.10px;background:#a8a8a8;"></div>
<div class="a" style="left:74px;top:146.3px;width:1.00px;height:1.10px;background:#a8a8a8;"></div>
<div class="a" style="left:81.5px;top:136px;width:55.00px;height:16.00px;background:#353535;border:1px solid #5a5a5a;border-radius:2.5px"></div>
<svg style="left:85.2px;top:140.6px" width="8" height="8" viewBox="0 0 8 8" fill="none" stroke="#6c6c6c" stroke-width="0.9"><path d="M0.5 0.5l6.8 6.8M7.3 0.5L0.5 7.3"/></svg>
<svg style="left:100px;top:140.8px" width="10" height="8" viewBox="0 0 10 8" fill="none" stroke="#6c6c6c" stroke-width="0.9"><path d="M0.5 4.4l2.7 2.7L9.4 0.6"/></svg>
<div class="t" style="left:116.80px;top:140.00px;font-size:9.2px;color:#c8c8c8;letter-spacing:1.059px;font-family:'Liberation Serif',serif;font-style:italic;">fx</div>
<svg style="left:128.70px;top:142.50px" width="6" height="3.6" viewBox="0 0 6 3.6" fill="none" stroke="#bdbdbd" stroke-width="0.85"><path d="M0.5 0.5L3.0 3.1 5.5 0.5"/></svg>
<div class="a" style="left:139.5px;top:136px;width:937.10px;height:16.00px;background:#353535;border:1px solid #5a5a5a;border-radius:2.5px"></div>
<div class="t" style="left:146.50px;top:141.00px;font-size:7.9px;color:#d2d2d2;letter-spacing:0.391px;">37.0618158086597%</div>
<svg style="left:1067.70px;top:142.20px" width="6" height="3.6" viewBox="0 0 6 3.6" fill="none" stroke="#bdbdbd" stroke-width="0.85"><path d="M0.5 0.5L3.0 3.1 5.5 0.5"/></svg>
<div class="a" style="left:0px;top:156px;width:1069.00px;height:12.00px;background:#3e3e3e;"></div>
<svg style="left:2.6px;top:158.2px" width="10" height="9" viewBox="0 0 10 9" ><path d="M9.6 0.4v8.6H0.4z" fill="#bababa"/></svg>
<div class="t" style="left:26.799999999999997px;width:20px;text-align:center;top:158.2px;font-size:8.6px;color:#bebebe">P</div>
<div class="t" style="left:144.0px;width:20px;text-align:center;top:158.2px;font-size:8.6px;color:#bebebe">Q</div>
<div class="t" style="left:265.5px;width:20px;text-align:center;top:158.2px;font-size:8.6px;color:#bebebe">R</div>
<div class="a" style="left:338px;top:156px;width:133.00px;height:12.00px;background:#4e4e4e;border-bottom:1.5px solid #2f7a55"></div>
<div class="t" style="left:394.5px;width:20px;text-align:center;top:158.2px;font-size:8.6px;color:#bebebe">S</div>
<div class="t" style="left:533.0px;width:20px;text-align:center;top:158.2px;font-size:8.6px;color:#bebebe">T</div>
<div class="t" style="left:696.5px;width:20px;text-align:center;top:158.2px;font-size:8.6px;color:#bebebe">U</div>
<div class="t" style="left:879.5px;width:20px;text-align:center;top:158.2px;font-size:8.6px;color:#bebebe">V</div>
<div class="a" style="left:94.5px;top:157px;width:1.00px;height:11.00px;background:#4a4a4a;"></div>
<div class="a" style="left:212.5px;top:157px;width:1.00px;height:11.00px;background:#747474;"></div>
<div class="a" style="left:614.5px;top:157px;width:1.00px;height:11.00px;background:#747474;"></div>
<div class="a" style="left:797.5px;top:157px;width:1.00px;height:11.00px;background:#747474;"></div>
<div class="a" style="left:980.5px;top:157px;width:1.00px;height:11.00px;background:#2c2c2c;"></div>
<div class="a" style="left:14px;top:168px;width:1055.00px;height:486.00px;background:#c1c1c1;"></div>
<div class="a" style="left:14px;top:168px;width:1055.00px;height:1.00px;background:#828282;"></div>
<div class="a" style="left:0px;top:168px;width:14.00px;height:486.00px;background:#3e3e3e;"></div>
<div class="a" style="left:0px;top:272.5px;width:14.00px;height:381.50px;background:#4b4b4b;border-right:1.3px solid #28573d"></div>
<div class="a" style="left:14px;top:197px;width:198.40px;height:13.00px;background:#90a57d;"></div>
<div class="a" style="left:14px;top:210px;width:81.00px;height:62.50px;background:#90a57d;"></div>
<div class="a" style="left:95px;top:210px;width:117.40px;height:62.50px;background:#a6b698;"></div>
<div class="a" style="left:212.4px;top:197px;width:125.60px;height:75.50px;background:#a0a7b3;"></div>
<div class="a" style="left:338px;top:197px;width:460.00px;height:75.50px;background:#c4b58c;"></div>
<div class="a" style="left:798px;top:197px;width:183.00px;height:75.50px;background:#90a57d;"></div>
<div class="a" style="left:981px;top:197px;width:88.00px;height:75.50px;background:#a3acc6;"></div>
<div class="a" style="left:339px;top:285.6px;width:130.80px;height:368.40px;background:#909090;"></div>
<svg style="left:0;top:0" width="1079" height="696" viewBox="0 0 1079 696" fill="none" stroke-width="1"><path d="M14 184.2H1069" stroke="#b2b2b2"/><path d="M14 197.0H1069" stroke="#b2b2b2"/><path d="M14 285.50H338M472 285.50H1069" stroke="#b7b7b7"/><path d="M339 285.50H469.8" stroke="#898989"/><path d="M14 298.09H338M472 298.09H1069" stroke="#b9b9b9"/><path d="M339 298.09H469.8" stroke="#8b8b8b"/><path d="M14 310.67H338M472 310.67H1069" stroke="#a3a3a3"/><path d="M339 310.67H469.8" stroke="#7e7e7e"/><path d="M14 323.26H338M472 323.26H1069" stroke="#bebebe"/><path d="M339 323.26H469.8" stroke="#8e8e8e"/><path d="M14 335.84H338M472 335.84H1069" stroke="#b0b0b0"/><path d="M339 335.84H469.8" stroke="#858585"/><path d="M14 348.43H338M472 348.43H1069" stroke="#b7b7b7"/><path d="M339 348.43H469.8" stroke="#898989"/><path d="M14 361.02H338M472 361.02H1069" stroke="#b9b9b9"/><path d="M339 361.02H469.8" stroke="#8b8b8b"/><path d="M14 373.60H338M472 373.60H1069" stroke="#a3a3a3"/><path d="M339 373.60H469.8" stroke="#7e7e7e"/><path d="M14 386.19H338M472 386.19H1069" stroke="#bebebe"/><path d="M339 386.19H469.8" stroke="#8e8e8e"/><path d="M14 398.77H338M472 398.77H1069" stroke="#b0b0b0"/><path d="M339 398.77H469.8" stroke="#858585"/><path d="M14 411.36H338M472 411.36H1069" stroke="#b7b7b7"/><path d="M339 411.36H469.8" stroke="#898989"/><path d="M14 423.95H338M472 423.95H1069" stroke="#b9b9b9"/><path d="M339 423.95H469.8" stroke="#8b8b8b"/><path d="M14 436.53H338M472 436.53H1069" stroke="#a3a3a3"/><path d="M339 436.53H469.8" stroke="#7e7e7e"/><path d="M14 449.12H338M472 449.12H1069" stroke="#bebebe"/><path d="M339 449.12H469.8" stroke="#8e8e8e"/><path d="M14 461.70H338M472 461.70H1069" stroke="#b0b0b0"/><path d="M339 461.70H469.8" stroke="#858585"/><path d="M14 474.29H338M472 474.29H1069" stroke="#b7b7b7"/><path d="M339 474.29H469.8" stroke="#898989"/><path d="M14 486.88H338M472 486.88H1069" stroke="#b9b9b9"/><path d="M339 486.88H469.8" stroke="#8b8b8b"/><path d="M14 499.46H338M472 499.46H1069" stroke="#a3a3a3"/><path d="M339 499.46H469.8" stroke="#7e7e7e"/><path d="M14 512.05H338M472 512.05H1069" stroke="#bebebe"/><path d="M339 512.05H469.8" stroke="#8e8e8e"/><path d="M14 524.63H338M472 524.63H1069" stroke="#b0b0b0"/><path d="M339 524.63H469.8" stroke="#858585"/><path d="M14 537.22H338M472 537.22H1069" stroke="#b7b7b7"/><path d="M339 537.22H469.8" stroke="#898989"/><path d="M14 549.81H338M472 549.81H1069" stroke="#b9b9b9"/><path d="M339 549.81H469.8" stroke="#8b8b8b"/><path d="M14 562.39H338M472 562.39H1069" stroke="#a3a3a3"/><path d="M339 562.39H469.8" stroke="#7e7e7e"/><path d="M14 574.98H338M472 574.98H1069" stroke="#bebebe"/><path d="M339 574.98H469.8" stroke="#8e8e8e"/><path d="M14 587.56H338M472 587.56H1069" stroke="#b0b0b0"/><path d="M339 587.56H469.8" stroke="#858585"/><path d="M14 600.15H338M472 600.15H1069" stroke="#b7b7b7"/><path d="M339 600.15H469.8" stroke="#898989"/><path d="M14 612.74H338M472 612.74H1069" stroke="#b9b9b9"/><path d="M339 612.74H469.8" stroke="#8b8b8b"/><path d="M14 625.32H338M472 625.32H1069" stroke="#a3a3a3"/><path d="M339 625.32H469.8" stroke="#7e7e7e"/><path d="M14 637.91H338M472 637.91H1069" stroke="#bebebe"/><path d="M339 637.91H469.8" stroke="#8e8e8e"/><path d="M14 650.49H338M472 650.49H1069" stroke="#b0b0b0"/><path d="M94.9 169V197M94.9 273V653.5" stroke="#bbbbbb"/><path d="M212.5 169V197M212.5 273V653.5" stroke="#adadad"/><path d="M615.5 169V197M615.5 273V653.5" stroke="#b8b8b8"/><path d="M798.4 169V197M798.4 273V653.5" stroke="#adadad"/><path d="M981.2 169V197M981.2 273V653.5" stroke="#b9b9b9"/><path d="M338 169V197" stroke="#b2b2b2"/><path d="M471.3 169V197" stroke="#b2b2b2"/><path d="M0 184.2H13" stroke="#5c5c5c"/><path d="M0 197.0H13" stroke="#5c5c5c"/><path d="M0 210.0H13" stroke="#5c5c5c"/><path d="M0 272.91H12.7" stroke="#666"/><path d="M0 285.50H12.7" stroke="#666"/><path d="M0 298.09H12.7" stroke="#666"/><path d="M0 310.67H12.7" stroke="#666"/><path d="M0 323.26H12.7" stroke="#666"/><path d="M0 335.84H12.7" stroke="#666"/><path d="M0 348.43H12.7" stroke="#666"/><path d="M0 361.02H12.7" stroke="#666"/><path d="M0 373.60H12.7" stroke="#666"/><path d="M0 386.19H12.7" stroke="#666"/><path d="M0 398.77H12.7" stroke="#666"/><path d="M0 411.36H12.7" stroke="#666"/><path d="M0 423.95H12.7" stroke="#666"/><path d="M0 436.53H12.7" stroke="#666"/><path d="M0 449.12H12.7" stroke="#666"/><path d="M0 461.70H12.7" stroke="#666"/><path d="M0 474.29H12.7" stroke="#666"/><path d="M0 486.88H12.7" stroke="#666"/><path d="M0 499.46H12.7" stroke="#666"/><path d="M0 512.05H12.7" stroke="#666"/><path d="M0 524.63H12.7" stroke="#666"/><path d="M0 537.22H12.7" stroke="#666"/><path d="M0 549.81H12.7" stroke="#666"/><path d="M0 562.39H12.7" stroke="#666"/><path d="M0 574.98H12.7" stroke="#666"/><path d="M0 587.56H12.7" stroke="#666"/><path d="M0 600.15H12.7" stroke="#666"/><path d="M0 612.74H12.7" stroke="#666"/><path d="M0 625.32H12.7" stroke="#666"/><path d="M0 637.91H12.7" stroke="#666"/><path d="M0 650.49H12.7" stroke="#666"/></svg>
<div class="a" style="left:14px;top:209.3px;width:1055.00px;height:1.00px;background:#3a3d36;"></div>
<div class="a" style="left:14px;top:272px;width:1055.00px;height:1.00px;background:#4a4a4a;"></div>
<div class="a" style="left:337px;top:272px;width:2.00px;height:382.00px;background:#7fae98;"></div>
<div class="a" style="left:469.8px;top:272px;width:2.20px;height:382.00px;background:#7fae98;"></div>
<div class="a" style="left:337.4px;top:271.7px;width:134.80px;height:1.40px;background:#23603f;"></div>
<div class="t" style="left:3.99px;top:173.00px;font-size:9.4px;color:#cdcdcd;">1</div>
<div class="t" style="left:3.99px;top:186.00px;font-size:9.4px;color:#cdcdcd;">2</div>
<div class="t" style="left:3.99px;top:199.00px;font-size:9.4px;color:#cdcdcd;">3</div>
<div class="t" style="left:3.99px;top:262.00px;font-size:9.4px;color:#cdcdcd;">4</div>
<div class="t" style="left:3.99px;top:275.00px;font-size:9.4px;color:#cdcdcd;letter-spacing:-0.55px;">5</div>
<div class="t" style="left:3.99px;top:287.00px;font-size:9.4px;color:#cdcdcd;letter-spacing:-0.55px;">6</div>
<div class="t" style="left:3.99px;top:300.00px;font-size:9.4px;color:#cdcdcd;letter-spacing:-0.55px;">7</div>
<div class="t" style="left:3.99px;top:312.00px;font-size:9.4px;color:#cdcdcd;letter-spacing:-0.55px;">8</div>
<div class="t" style="left:3.99px;top:325.00px;font-size:9.4px;color:#cdcdcd;letter-spacing:-0.55px;">9</div>
<div class="t" style="left:1.66px;top:337.00px;font-size:9.4px;color:#cdcdcd;letter-spacing:-0.55px;">10</div>
<div class="t" style="left:2.01px;top:350.00px;font-size:9.4px;color:#cdcdcd;letter-spacing:-0.55px;">11</div>
<div class="t" style="left:1.66px;top:363.00px;font-size:9.4px;color:#cdcdcd;letter-spacing:-0.55px;">12</div>
<div class="t" style="left:1.66px;top:375.00px;font-size:9.4px;color:#cdcdcd;letter-spacing:-0.55px;">13</div>
<div class="t" style="left:1.66px;top:388.00px;font-size:9.4px;color:#cdcdcd;letter-spacing:-0.55px;">14</div>
<div class="t" style="left:1.66px;top:400.00px;font-size:9.4px;color:#cdcdcd;letter-spacing:-0.55px;">15</div>
<div class="t" style="left:1.66px;top:413.00px;font-size:9.4px;color:#cdcdcd;letter-spacing:-0.55px;">16</div>
<div class="t" style="left:1.66px;top:426.00px;font-size:9.4px;color:#cdcdcd;letter-spacing:-0.55px;">17</div>
<div class="t" style="left:1.66px;top:438.00px;font-size:9.4px;color:#cdcdcd;letter-spacing:-0.55px;">18</div>
<div class="t" style="left:1.66px;top:451.00px;font-size:9.4px;color:#cdcdcd;letter-spacing:-0.55px;">19</div>
<div class="t" style="left:1.66px;top:463.00px;font-size:9.4px;color:#cdcdcd;letter-spacing:-0.55px;">20</div>
<div class="t" style="left:1.66px;top:476.00px;font-size:9.4px;color:#cdcdcd;letter-spacing:-0.55px;">21</div>
<div class="t" style="left:1.66px;top:489.00px;font-size:9.4px;color:#cdcdcd;letter-spacing:-0.55px;">22</div>
<div class="t" style="left:1.66px;top:501.00px;font-size:9.4px;color:#cdcdcd;letter-spacing:-0.55px;">23</div>
<div class="t" style="left:1.66px;top:514.00px;font-size:9.4px;color:#cdcdcd;letter-spacing:-0.55px;">24</div>
<div class="t" style="left:1.66px;top:526.00px;font-size:9.4px;color:#cdcdcd;letter-spacing:-0.55px;">25</div>
<div class="t" style="left:1.66px;top:539.00px;font-size:9.4px;color:#cdcdcd;letter-spacing:-0.55px;">26</div>
<div class="t" style="left:1.66px;top:551.00px;font-size:9.4px;color:#cdcdcd;letter-spacing:-0.55px;">27</div>
<div class="t" style="left:1.66px;top:564.00px;font-size:9.4px;color:#cdcdcd;letter-spacing:-0.55px;">28</div>
<div class="t" style="left:1.66px;top:577.00px;font-size:9.4px;color:#cdcdcd;letter-spacing:-0.55px;">29</div>
<div class="t" style="left:1.66px;top:589.00px;font-size:9.4px;color:#cdcdcd;letter-spacing:-0.55px;">30</div>
<div class="t" style="left:1.66px;top:602.00px;font-size:9.4px;color:#cdcdcd;letter-spacing:-0.55px;">31</div>
<div class="t" style="left:1.66px;top:614.00px;font-size:9.4px;color:#cdcdcd;letter-spacing:-0.55px;">32</div>
<div class="t" style="left:1.66px;top:627.00px;font-size:9.4px;color:#cdcdcd;letter-spacing:-0.55px;">33</div>
<div class="t" style="left:1.66px;top:640.00px;font-size:9.4px;color:#cdcdcd;letter-spacing:-0.55px;">34</div>
<div class="a" style="left:14px;top:198px;width:199.00px;height:13.5px;overflow:hidden"><div class="t" style="left:-23.30px;top:2px;font-size:8.5px;color:#111;letter-spacing:-0.081px;font-weight:bold;-webkit-text-stroke:0.12px #111;">Population ajustée</div></div>
<div class="a" style="left:14px;top:198px;width:199.00px;height:13.5px;overflow:hidden"><div class="t" style="left:53.80px;top:2px;font-size:8.5px;color:#ee1406;letter-spacing:0.000px;font-weight:bold;-webkit-text-stroke:0.12px #ee1406;transform:scaleX(0.8865);transform-origin:0 0;">EVC</div></div>
<div class="a" style="left:213.5px;top:198px;width:124.50px;height:13.5px;overflow:hidden"><div class="t" style="left:0.80px;top:2px;font-size:8.5px;color:#111;letter-spacing:0.047px;font-weight:bold;-webkit-text-stroke:0.12px #111;">Population dénombrement</div></div>
<div class="a" style="left:338.5px;top:198px;width:459.50px;height:13.5px;overflow:hidden"><div class="t" style="left:106.00px;top:2px;font-size:8.5px;color:#111;letter-spacing:0.005px;font-weight:bold;-webkit-text-stroke:0.12px #111;">Couverture IHME (Institute for Health Metrics and Evaluation)</div></div>
<div class="a" style="left:798.5px;top:198px;width:182.50px;height:13.5px;overflow:hidden"><div class="t" style="left:2.30px;top:2px;font-size:8.5px;color:#111;letter-spacing:-0.058px;font-weight:bold;-webkit-text-stroke:0.12px #111;">Population ajustée</div></div>
<div class="a" style="left:798.5px;top:198px;width:182.50px;height:13.5px;overflow:hidden"><div class="t" style="left:81.70px;top:2px;font-size:8.5px;color:#ee1406;letter-spacing:0.000px;font-weight:bold;-webkit-text-stroke:0.12px #ee1406;transform:scaleX(0.9882);transform-origin:0 0;">IHME</div></div>
<div class="a" style="left:14px;top:211px;width:81.00px;height:13.5px;overflow:hidden"><div class="t" style="left:-34.40px;top:2px;font-size:8.5px;color:#111;letter-spacing:-0.030px;font-weight:bold;-webkit-text-stroke:0.12px #111;">Population ajustée -</div></div>
<div class="a" style="left:14px;top:223px;width:81.00px;height:13.5px;overflow:hidden"><div class="t" style="left:-34.40px;top:2px;font-size:8.5px;color:#111;letter-spacing:-0.125px;font-weight:bold;-webkit-text-stroke:0.12px #111;">Nombre de nourrissons</div></div>
<div class="a" style="left:14px;top:236px;width:81.00px;height:13.5px;overflow:hidden"><div class="t" style="left:-34.40px;top:2px;font-size:8.5px;color:#111;letter-spacing:-0.140px;font-weight:bold;-webkit-text-stroke:0.12px #111;">survivants avec la borne inf</div></div>
<div class="a" style="left:95.5px;top:211px;width:117.50px;height:13.5px;overflow:hidden"><div class="t" style="left:1.40px;top:2px;font-size:8.5px;color:#111;letter-spacing:-0.030px;font-weight:bold;-webkit-text-stroke:0.12px #111;">Population ajustée -</div></div>
<div class="a" style="left:95.5px;top:223px;width:117.50px;height:13.5px;overflow:hidden"><div class="t" style="left:1.40px;top:2px;font-size:8.5px;color:#111;letter-spacing:-0.120px;font-weight:bold;-webkit-text-stroke:0.12px #111;">Nombre de nourrissons</div></div>
<div class="a" style="left:95.5px;top:236px;width:117.50px;height:13.5px;overflow:hidden"><div class="t" style="left:1.40px;top:2px;font-size:8.5px;color:#111;letter-spacing:-0.163px;font-weight:bold;-webkit-text-stroke:0.12px #111;">survivants avec la borne sup</div></div>
<div class="a" style="left:95.5px;top:248px;width:117.50px;height:13.5px;overflow:hidden"><div class="t" style="left:1.40px;top:2px;font-size:8.5px;color:#111;letter-spacing:-0.801px;font-weight:bold;-webkit-text-stroke:0.12px #111;">DTC1</div></div>
<div class="a" style="left:213.5px;top:211px;width:124.50px;height:13.5px;overflow:hidden"><div class="t" style="left:0.80px;top:2px;font-size:8.5px;color:#111;letter-spacing:-0.042px;font-weight:bold;-webkit-text-stroke:0.12px #111;">Estimation de la population</div></div>
<div class="a" style="left:213.5px;top:223px;width:124.50px;height:13.5px;overflow:hidden"><div class="t" style="left:0.80px;top:2px;font-size:8.5px;color:#111;letter-spacing:-0.211px;font-weight:bold;-webkit-text-stroke:0.12px #111;">des nourrissons survivants sur</div></div>
<div class="a" style="left:213.5px;top:236px;width:124.50px;height:13.5px;overflow:hidden"><div class="t" style="left:0.80px;top:2px;font-size:8.5px;color:#111;letter-spacing:-0.142px;font-weight:bold;-webkit-text-stroke:0.12px #111;">la base des données du</div></div>
<div class="a" style="left:213.5px;top:248px;width:124.50px;height:13.5px;overflow:hidden"><div class="t" style="left:0.80px;top:2px;font-size:8.5px;color:#111;letter-spacing:0.059px;font-weight:bold;-webkit-text-stroke:0.12px #111;">dernier dénombrement</div></div>
<div class="a" style="left:338.5px;top:211px;width:132.50px;height:13.5px;overflow:hidden"><div class="t" style="left:1.30px;top:2px;font-size:8.5px;color:#111;letter-spacing:-0.072px;font-weight:bold;-webkit-text-stroke:0.12px #111;">Estimation ponctuelle de la</div></div>
<div class="a" style="left:338.5px;top:223px;width:132.50px;height:13.5px;overflow:hidden"><div class="t" style="left:1.30px;top:2px;font-size:8.5px;color:#111;letter-spacing:-0.150px;font-weight:bold;-webkit-text-stroke:0.12px #111;">couverture DTC1</div></div>
<div class="a" style="left:471.5px;top:211px;width:143.50px;height:13.5px;overflow:hidden"><div class="t" style="left:1.00px;top:2px;font-size:8.5px;color:#111;letter-spacing:-0.029px;font-weight:bold;-webkit-text-stroke:0.12px #111;">Borne inférieure de l&#x27;intervalle de</div></div>
<div class="a" style="left:471.5px;top:223px;width:143.50px;height:13.5px;overflow:hidden"><div class="t" style="left:1.00px;top:2px;font-size:8.5px;color:#111;letter-spacing:-0.160px;font-weight:bold;-webkit-text-stroke:0.12px #111;">confiance couverture DTC1</div></div>
<div class="a" style="left:615.5px;top:211px;width:182.50px;height:13.5px;overflow:hidden"><div class="t" style="left:2.00px;top:2px;font-size:8.5px;color:#111;letter-spacing:-0.086px;font-weight:bold;-webkit-text-stroke:0.12px #111;">Borne supérieure de l&#x27;intervalle de confiance</div></div>
<div class="a" style="left:615.5px;top:223px;width:182.50px;height:13.5px;overflow:hidden"><div class="t" style="left:2.00px;top:2px;font-size:8.5px;color:#111;letter-spacing:-0.157px;font-weight:bold;-webkit-text-stroke:0.12px #111;">couverture DTC1</div></div>
<div class="a" style="left:798.5px;top:211px;width:182.50px;height:13.5px;overflow:hidden"><div class="t" style="left:2.30px;top:2px;font-size:8.5px;color:#111;letter-spacing:-0.073px;font-weight:bold;-webkit-text-stroke:0.12px #111;">Population ajustée - Nombre de nourrissons</div></div>
<div class="a" style="left:798.5px;top:223px;width:182.50px;height:13.5px;overflow:hidden"><div class="t" style="left:2.30px;top:2px;font-size:8.5px;color:#111;letter-spacing:-0.315px;font-weight:bold;-webkit-text-stroke:0.12px #111;">survivants</div></div>
<div class="a" style="left:981.5px;top:211px;width:85.70px;height:13.5px;overflow:hidden"><div class="t" style="left:3.70px;top:2px;font-size:8.5px;color:#111;letter-spacing:-0.040px;font-weight:bold;-webkit-text-stroke:0.12px #111;">Taux de variation de la cible</div></div>
<div class="a" style="left:981.5px;top:223px;width:87.50px;height:13.5px;overflow:hidden"><div class="t" style="left:1.30px;top:2px;font-size:8.5px;color:#111;letter-spacing:-0.139px;font-weight:bold;-webkit-text-stroke:0.12px #111;">par rapport à la cible (borne</div></div>
<div class="a" style="left:981.5px;top:236px;width:87.50px;height:13.5px;overflow:hidden"><div class="t" style="left:1.30px;top:2px;font-size:8.5px;color:#111;letter-spacing:-0.128px;font-weight:bold;-webkit-text-stroke:0.12px #111;">inférieure)</div></div>
<div class="fb" style="left:83.9px;top:261.1px"></div>
<div class="fb" style="left:201.6px;top:261.1px"></div>
<div class="fb" style="left:327.0px;top:261.1px"></div>
<div class="fb" style="left:459.9px;top:261.1px"></div>
<div class="fb" style="left:604.9px;top:261.1px"></div>
<div class="fb" style="left:787.2px;top:261.1px"></div>
<div class="fb" style="left:970.0px;top:261.1px"></div>
<div class="t" style="left:42.97px;top:275.00px;font-size:8.7px;color:#151515;-webkit-text-stroke:0.2px #151515;">33884.61538</div>
<div class="t" style="left:160.17px;top:275.00px;font-size:8.7px;color:#151515;-webkit-text-stroke:0.2px #151515;">7555.746141</div>
<div class="t" style="left:451.91px;top:275.00px;font-size:8.7px;color:#151515;-webkit-text-stroke:0.2px #151515;">37%</div>
<div class="t" style="left:42.97px;top:288.00px;font-size:8.7px;color:#151515;-webkit-text-stroke:0.2px #151515;">8469.879518</div>
<div class="t" style="left:160.17px;top:288.00px;font-size:8.7px;color:#151515;-webkit-text-stroke:0.2px #151515;">5062.757202</div>
<div class="t" style="left:451.91px;top:288.00px;font-size:8.7px;color:#151515;-webkit-text-stroke:0.2px #151515;">50%</div>
<div class="t" style="left:21.40px;top:301.00px;font-size:8.9px;color:#151515;letter-spacing:0.098px;-webkit-text-stroke:0.2px #151515;">#DIV/0!</div>
<div class="t" style="left:139.20px;top:301.00px;font-size:8.9px;color:#151515;letter-spacing:0.098px;-webkit-text-stroke:0.2px #151515;">#DIV/0!</div>
<svg style="left:95.4px;top:298.59px" width="4" height="4" viewBox="0 0 4 4"><path d="M0 0h4L0 4z" fill="#1f6a2c"/></svg>
<div class="t" style="left:451.91px;top:301.00px;font-size:8.7px;color:#151515;-webkit-text-stroke:0.2px #151515;">40%</div>
<div class="t" style="left:42.97px;top:313.00px;font-size:8.7px;color:#151515;-webkit-text-stroke:0.2px #151515;">45943.26241</div>
<div class="t" style="left:186.73px;top:313.00px;font-size:8.7px;color:#151515;-webkit-text-stroke:0.2px #151515;">10250</div>
<div class="t" style="left:451.91px;top:313.00px;font-size:8.7px;color:#151515;-webkit-text-stroke:0.2px #151515;">47%</div>
<div class="t" style="left:42.97px;top:326.00px;font-size:8.7px;color:#151515;-webkit-text-stroke:0.2px #151515;">13517.24138</div>
<div class="t" style="left:164.99px;top:326.00px;font-size:8.7px;color:#151515;-webkit-text-stroke:0.2px #151515;">7775.96266</div>
<div class="t" style="left:451.91px;top:326.00px;font-size:8.7px;color:#151515;-webkit-text-stroke:0.2px #151515;">45%</div>
<div class="t" style="left:42.97px;top:338.00px;font-size:8.7px;color:#151515;-webkit-text-stroke:0.2px #151515;">10337.81513</div>
<div class="t" style="left:160.17px;top:338.00px;font-size:8.7px;color:#151515;-webkit-text-stroke:0.2px #151515;">6407.291667</div>
<div class="t" style="left:451.91px;top:338.00px;font-size:8.7px;color:#151515;-webkit-text-stroke:0.2px #151515;">46%</div>
<div class="t" style="left:42.97px;top:351.00px;font-size:8.7px;color:#151515;-webkit-text-stroke:0.2px #151515;">12798.31933</div>
<div class="t" style="left:160.17px;top:351.00px;font-size:8.7px;color:#151515;-webkit-text-stroke:0.2px #151515;">4657.492355</div>
<div class="t" style="left:451.91px;top:351.00px;font-size:8.7px;color:#151515;-webkit-text-stroke:0.2px #151515;">42%</div>
<div class="t" style="left:47.79px;top:364.00px;font-size:8.7px;color:#151515;-webkit-text-stroke:0.2px #151515;">6694.76082</div>
<div class="t" style="left:160.17px;top:364.00px;font-size:8.7px;color:#151515;-webkit-text-stroke:0.2px #151515;">3646.401985</div>
<div class="t" style="left:451.91px;top:364.00px;font-size:8.7px;color:#151515;-webkit-text-stroke:0.2px #151515;">57%</div>
<div class="t" style="left:42.97px;top:376.00px;font-size:8.7px;color:#151515;-webkit-text-stroke:0.2px #151515;">9781.563126</div>
<div class="t" style="left:160.17px;top:376.00px;font-size:8.7px;color:#151515;-webkit-text-stroke:0.2px #151515;">5852.517986</div>
<div class="t" style="left:451.91px;top:376.00px;font-size:8.7px;color:#151515;-webkit-text-stroke:0.2px #151515;">48%</div>
<div class="t" style="left:42.97px;top:389.00px;font-size:8.7px;color:#151515;-webkit-text-stroke:0.2px #151515;">8301.546392</div>
<div class="t" style="left:160.17px;top:389.00px;font-size:8.7px;color:#151515;-webkit-text-stroke:0.2px #151515;">3762.850467</div>
<div class="t" style="left:451.91px;top:389.00px;font-size:8.7px;color:#151515;-webkit-text-stroke:0.2px #151515;">48%</div>
<div class="t" style="left:69.53px;top:401.00px;font-size:8.7px;color:#151515;-webkit-text-stroke:0.2px #151515;">12500</div>
<div class="t" style="left:160.17px;top:401.00px;font-size:8.7px;color:#151515;-webkit-text-stroke:0.2px #151515;">4766.297663</div>
<div class="t" style="left:451.91px;top:401.00px;font-size:8.7px;color:#151515;-webkit-text-stroke:0.2px #151515;">53%</div>
<div class="t" style="left:42.97px;top:414.00px;font-size:8.7px;color:#151515;-webkit-text-stroke:0.2px #151515;">13919.28251</div>
<div class="t" style="left:160.17px;top:414.00px;font-size:8.7px;color:#151515;-webkit-text-stroke:0.2px #151515;">10034.48276</div>
<div class="t" style="left:451.91px;top:414.00px;font-size:8.7px;color:#151515;-webkit-text-stroke:0.2px #151515;">63%</div>
<div class="t" style="left:42.97px;top:426.00px;font-size:8.7px;color:#151515;-webkit-text-stroke:0.2px #151515;">9509.584665</div>
<div class="t" style="left:160.17px;top:426.00px;font-size:8.7px;color:#151515;-webkit-text-stroke:0.2px #151515;">6718.961625</div>
<div class="t" style="left:451.91px;top:426.00px;font-size:8.7px;color:#151515;-webkit-text-stroke:0.2px #151515;">67%</div>
<div class="t" style="left:43.61px;top:439.00px;font-size:8.7px;color:#151515;-webkit-text-stroke:0.2px #151515;">9209.251101</div>
<div class="t" style="left:169.82px;top:439.00px;font-size:8.7px;color:#151515;-webkit-text-stroke:0.2px #151515;">5508.5639</div>
<div class="t" style="left:451.91px;top:439.00px;font-size:8.7px;color:#151515;-webkit-text-stroke:0.2px #151515;">66%</div>
<div class="t" style="left:21.40px;top:452.00px;font-size:8.9px;color:#151515;letter-spacing:0.098px;-webkit-text-stroke:0.2px #151515;">#DIV/0!</div>
<div class="t" style="left:139.20px;top:452.00px;font-size:8.9px;color:#151515;letter-spacing:0.098px;-webkit-text-stroke:0.2px #151515;">#DIV/0!</div>
<svg style="left:95.4px;top:449.62px" width="4" height="4" viewBox="0 0 4 4"><path d="M0 0h4L0 4z" fill="#1f6a2c"/></svg>
<div class="t" style="left:451.91px;top:452.00px;font-size:8.7px;color:#151515;-webkit-text-stroke:0.2px #151515;">62%</div>
<div class="t" style="left:47.79px;top:464.00px;font-size:8.7px;color:#151515;-webkit-text-stroke:0.2px #151515;">5222.35723</div>
<div class="t" style="left:160.17px;top:464.00px;font-size:8.7px;color:#151515;-webkit-text-stroke:0.2px #151515;">4306.613226</div>
<div class="t" style="left:451.91px;top:464.00px;font-size:8.7px;color:#151515;-webkit-text-stroke:0.2px #151515;">60%</div>
<div class="t" style="left:42.97px;top:477.00px;font-size:8.7px;color:#151515;-webkit-text-stroke:0.2px #151515;">7393.162393</div>
<div class="t" style="left:160.81px;top:477.00px;font-size:8.7px;color:#151515;-webkit-text-stroke:0.2px #151515;">2689.119171</div>
<div class="t" style="left:451.91px;top:477.00px;font-size:8.7px;color:#151515;-webkit-text-stroke:0.2px #151515;">57%</div>
<div class="t" style="left:42.97px;top:489.00px;font-size:8.7px;color:#151515;-webkit-text-stroke:0.2px #151515;">8588.842975</div>
<div class="t" style="left:164.99px;top:489.00px;font-size:8.7px;color:#151515;-webkit-text-stroke:0.2px #151515;">5426.89295</div>
<div class="t" style="left:451.91px;top:489.00px;font-size:8.7px;color:#151515;-webkit-text-stroke:0.2px #151515;">65%</div>
<div class="t" style="left:42.97px;top:502.00px;font-size:8.7px;color:#151515;-webkit-text-stroke:0.2px #151515;">10274.74747</div>
<div class="t" style="left:160.17px;top:502.00px;font-size:8.7px;color:#151515;-webkit-text-stroke:0.2px #151515;">5468.817204</div>
<div class="t" style="left:451.91px;top:502.00px;font-size:8.7px;color:#151515;-webkit-text-stroke:0.2px #151515;">68%</div>
<div class="t" style="left:42.97px;top:515.00px;font-size:8.7px;color:#151515;-webkit-text-stroke:0.2px #151515;">3853.046595</div>
<div class="t" style="left:160.17px;top:515.00px;font-size:8.7px;color:#151515;-webkit-text-stroke:0.2px #151515;">2301.927195</div>
<div class="t" style="left:451.91px;top:515.00px;font-size:8.7px;color:#151515;-webkit-text-stroke:0.2px #151515;">66%</div>
<div class="t" style="left:42.97px;top:527.00px;font-size:8.7px;color:#151515;-webkit-text-stroke:0.2px #151515;">5334.410339</div>
<div class="t" style="left:160.81px;top:527.00px;font-size:8.7px;color:#151515;-webkit-text-stroke:0.2px #151515;">3376.278119</div>
<div class="t" style="left:451.91px;top:527.00px;font-size:8.7px;color:#151515;-webkit-text-stroke:0.2px #151515;">56%</div>
<div class="t" style="left:42.97px;top:540.00px;font-size:8.7px;color:#151515;-webkit-text-stroke:0.2px #151515;">5020.656136</div>
<div class="t" style="left:160.17px;top:540.00px;font-size:8.7px;color:#151515;-webkit-text-stroke:0.2px #151515;">4148.594378</div>
<div class="t" style="left:451.91px;top:540.00px;font-size:8.7px;color:#151515;-webkit-text-stroke:0.2px #151515;">60%</div>
<div class="t" style="left:42.97px;top:552.00px;font-size:8.7px;color:#151515;-webkit-text-stroke:0.2px #151515;">6462.560386</div>
<div class="t" style="left:160.17px;top:552.00px;font-size:8.7px;color:#151515;-webkit-text-stroke:0.2px #151515;">5394.153226</div>
<div class="t" style="left:451.91px;top:552.00px;font-size:8.7px;color:#151515;-webkit-text-stroke:0.2px #151515;">69%</div>
<div class="t" style="left:42.97px;top:565.00px;font-size:8.7px;color:#151515;-webkit-text-stroke:0.2px #151515;">5769.230769</div>
<div class="t" style="left:160.17px;top:565.00px;font-size:8.7px;color:#151515;-webkit-text-stroke:0.2px #151515;">4571.280992</div>
<div class="t" style="left:451.91px;top:565.00px;font-size:8.7px;color:#151515;-webkit-text-stroke:0.2px #151515;">53%</div>
<div class="t" style="left:42.97px;top:577.00px;font-size:8.7px;color:#151515;-webkit-text-stroke:0.2px #151515;">6162.857143</div>
<div class="t" style="left:160.17px;top:577.00px;font-size:8.7px;color:#151515;-webkit-text-stroke:0.2px #151515;">4384.146341</div>
<div class="t" style="left:451.91px;top:577.00px;font-size:8.7px;color:#151515;-webkit-text-stroke:0.2px #151515;">52%</div>
<div class="t" style="left:48.43px;top:590.00px;font-size:8.7px;color:#151515;-webkit-text-stroke:0.2px #151515;">11267.0227</div>
<div class="t" style="left:160.17px;top:590.00px;font-size:8.7px;color:#151515;-webkit-text-stroke:0.2px #151515;">8472.891566</div>
<div class="t" style="left:451.91px;top:590.00px;font-size:8.7px;color:#151515;-webkit-text-stroke:0.2px #151515;">65%</div>
<div class="t" style="left:42.97px;top:603.00px;font-size:8.7px;color:#151515;-webkit-text-stroke:0.2px #151515;">3340.675477</div>
<div class="t" style="left:160.17px;top:603.00px;font-size:8.7px;color:#151515;-webkit-text-stroke:0.2px #151515;">2304.964539</div>
<div class="t" style="left:451.91px;top:603.00px;font-size:8.7px;color:#151515;-webkit-text-stroke:0.2px #151515;">63%</div>
<div class="t" style="left:42.97px;top:615.00px;font-size:8.7px;color:#151515;-webkit-text-stroke:0.2px #151515;">8043.243243</div>
<div class="t" style="left:160.17px;top:615.00px;font-size:8.7px;color:#151515;-webkit-text-stroke:0.2px #151515;">3501.176471</div>
<div class="t" style="left:451.91px;top:615.00px;font-size:8.7px;color:#151515;-webkit-text-stroke:0.2px #151515;">61%</div>
<div class="t" style="left:21.40px;top:628.00px;font-size:8.9px;color:#151515;letter-spacing:0.098px;-webkit-text-stroke:0.2px #151515;">#DIV/0!</div>
<div class="t" style="left:139.20px;top:628.00px;font-size:8.9px;color:#151515;letter-spacing:0.098px;-webkit-text-stroke:0.2px #151515;">#DIV/0!</div>
<svg style="left:95.4px;top:625.82px" width="4" height="4" viewBox="0 0 4 4"><path d="M0 0h4L0 4z" fill="#1f6a2c"/></svg>
<div class="t" style="left:451.91px;top:628.00px;font-size:8.7px;color:#151515;-webkit-text-stroke:0.2px #151515;">67%</div>
<div class="t" style="left:43.61px;top:640.00px;font-size:8.7px;color:#151515;-webkit-text-stroke:0.2px #151515;">9119.266055</div>
<div class="t" style="left:160.17px;top:640.00px;font-size:8.7px;color:#151515;-webkit-text-stroke:0.2px #151515;">6271.293375</div>
<div class="t" style="left:451.91px;top:640.00px;font-size:8.7px;color:#151515;-webkit-text-stroke:0.2px #151515;">71%</div>
<svg style="left:444px;top:288px" width="10" height="10" viewBox="0 0 10 10" ><path d="M3.6 0.6h2.8v3h3v2.8h-3v3H3.6v-3h-3V3.6h3z" fill="#f4f4f4" stroke="#111" stroke-width="0.9"/></svg>
<div class="a" style="left:1069px;top:156px;width:10.00px;height:498.00px;background:#3a3a3a;"></div>
<div class="a" style="left:1069.6px;top:156.4px;width:10.40px;height:497.60px;background:#2a2a2a;border-radius:5px 0 0 0"></div>
<svg style="left:1073px;top:159.8px" width="5.4" height="4" viewBox="0 0 5.4 4" ><path d="M0 4L2.7 0l2.7 4z" fill="#a8a8a8"/></svg>
<div class="a" style="left:1073px;top:166.6px;width:5.20px;height:34.00px;background:#8c8c8c;border-radius:3px"></div>
<div class="a" style="left:0px;top:654px;width:1079.00px;height:20.00px;background:#3b3b3b;"></div>
<div class="a" style="left:0px;top:653px;width:1069.00px;height:1.00px;background:#747474;"></div>
<div class="a" style="left:0px;top:653px;width:14.00px;height:1.00px;background:#3d3d3d;"></div>
<div class="a" style="left:1069px;top:653px;width:10.00px;height:1.00px;background:#333;"></div>
<svg style="left:11.5px;top:659.5px" width="5" height="8" viewBox="0 0 5 8" fill="none" stroke="#909090" stroke-width="0.9"><path d="M4.2 0.6L0.8 4l3.4 3.4"/></svg>
<svg style="left:32.5px;top:659.5px" width="5" height="8" viewBox="0 0 5 8" fill="none" stroke="#909090" stroke-width="0.9"><path d="M0.8 0.6L4.2 4 0.8 7.4"/></svg>
<div class="a" style="left:52px;top:662.6px;width:1.30px;height:1.30px;background:#c4c4c4;"></div>
<div class="a" style="left:54.6px;top:662.6px;width:1.30px;height:1.30px;background:#c4c4c4;"></div>
<div class="a" style="left:57.2px;top:662.6px;width:1.30px;height:1.30px;background:#c4c4c4;"></div>
<div class="a" style="left:69px;top:653px;width:116.20px;height:18.70px;background:#c3c9c1;border-radius:0 0 2.5px 2.5px"></div>
<svg style="left:66px;top:653.6px" width="3" height="3" viewBox="0 0 3 3" ><path d="M0 0H3V3Q3 0 0 0z" fill="#c3c9c1"/></svg>
<svg style="left:185.2px;top:653.6px" width="3" height="3" viewBox="0 0 3 3" ><path d="M0 0H3Q0 0 0 3z" fill="#c3c9c1"/></svg>
<div class="a" style="left:188px;top:656px;width:1.00px;height:14.00px;background:#4a4a4a;"></div>
<div class="t" style="left:74.00px;top:658.00px;font-size:9.6px;color:#15201a;letter-spacing:-0.190px;">Ajustement Nrs Survivans</div>
<div class="a" style="left:74px;top:668.6px;width:106.00px;height:1.50px;background:#1f7a48;"></div>
<div class="a" style="left:191px;top:656px;width:117.00px;height:15.60px;background:#c4500d;border-radius:3px"></div>
<div class="t" style="left:197.80px;top:660.00px;font-size:8.9px;color:#f3d9c8;letter-spacing:0.047px;">Ajustement Nsce vivantes</div>
<div class="a" style="left:310.3px;top:658px;width:1.00px;height:11.00px;background:#666;"></div>
<div class="a" style="left:314.3px;top:656px;width:98.50px;height:15.60px;background:#6f2fa2;border-radius:3px"></div>
<div class="t" style="left:320.30px;top:660.00px;font-size:8.9px;color:#ead9f3;letter-spacing:0.016px;">Analyse de sensibilite</div>
<div class="a" style="left:415.2px;top:658px;width:1.00px;height:11.00px;background:#666;"></div>
<svg style="left:442px;top:659.5px" width="8" height="8" viewBox="0 0 8 8" fill="none" stroke="#b8b8b8" stroke-width="0.8"><path d="M4 0.4v7.2M0.4 4h7.2"/></svg>
<div class="a" style="left:649.6px;top:660.5px;width:1.00px;height:1.00px;background:#aaa;"></div>
<div class="a" style="left:649.6px;top:663px;width:1.00px;height:1.00px;background:#aaa;"></div>
<div class="a" style="left:649.6px;top:665.5px;width:1.00px;height:1.00px;background:#aaa;"></div>
<div class="a" style="left:661px;top:658px;width:240.00px;height:10.50px;background:#2a2a2a;border-radius:5px"></div>
<svg style="left:664px;top:660.5px" width="5" height="6" viewBox="0 0 5 6" ><path d="M5 0v6L0 3z" fill="#b5b5b5"/></svg>
<div class="a" style="left:791px;top:660.6px;width:75.00px;height:5.60px;background:#8d8d8d;border-radius:3px"></div>
<div class="a" style="left:0px;top:674px;width:1079.00px;height:22.00px;background:#343434;"></div>
<div class="a" style="left:0px;top:674px;width:1079.00px;height:1.00px;background:#252525;"></div>
<div class="a" style="left:0px;top:695px;width:1079.00px;height:1.00px;background:#111;"></div>
<div class="t" style="left:7.50px;top:681.00px;font-size:7.0px;color:#b6b6b6;letter-spacing:-0.238px;">Select destination and press ENTER or choose Paste</div>
<div class="t" style="left:632.00px;top:681.00px;font-size:7.0px;color:#b6b6b6;letter-spacing:-0.278px;">Average: 67%</div>
<div class="t" style="left:690.40px;top:681.00px;font-size:7.0px;color:#b6b6b6;letter-spacing:-0.161px;">Count: 510</div>
<div class="t" style="left:740.60px;top:681.00px;font-size:7.0px;color:#b6b6b6;letter-spacing:-0.158px;">Sum: 34918%</div>
<svg style="left:803px;top:680px" width="10" height="9" viewBox="0 0 10 9" fill="none" stroke="#c4c4c4" stroke-width="0.8"><rect x="0.5" y="0.5" width="8" height="5.5"/><path d="M2.5 8h4M4.5 6v2"/><circle cx="7.2" cy="6.2" r="1.6" fill="#343434"/></svg>
<div class="t" style="left:815.00px;top:681.00px;font-size:7.0px;color:#b6b6b6;letter-spacing:-0.214px;">Display Settings</div>
<div class="a" style="left:878px;top:676px;width:27.00px;height:18.00px;background:#454545;"></div>
<svg style="left:887px;top:679.5px" width="10" height="10" viewBox="0 0 10 10" fill="none" stroke="#c2c2c2" stroke-width="0.85"><rect x="0.5" y="0.5" width="9" height="9"/><path d="M0.5 3.5h9M0.5 6.5h9M3.5 0.5v9M6.5 0.5v9"/></svg>
<svg style="left:914px;top:680px" width="10" height="9" viewBox="0 0 10 9" fill="none" stroke="#b2b2b2" stroke-width="0.8"><rect x="0.5" y="0.5" width="9" height="8"/><rect x="2.6" y="2.4" width="4.8" height="4.4" fill="#a8a8a8" stroke="none"/></svg>
<svg style="left:941px;top:679.5px" width="10" height="10" viewBox="0 0 10 10" fill="none" stroke="#b2b2b2" stroke-width="0.8"><rect x="0.5" y="0.5" width="9" height="9"/><path d="M3.5 0.5v5h3v-5M0.5 6.5h9" /></svg>
<div class="a" style="left:963px;top:684.2px;width:4.00px;height:0.90px;background:#c4c4c4;"></div>
<div class="a" style="left:971px;top:684.3px;width:65.00px;height:0.70px;background:#9a9a9a;"></div>
<div class="a" style="left:1002.4px;top:681px;width:2.60px;height:8.40px;background:#b4b4b4;"></div>
<div class="a" style="left:1039px;top:684.2px;width:5.00px;height:0.90px;background:#c4c4c4;"></div>
<div class="a" style="left:1041.05px;top:682.2px;width:0.90px;height:5.00px;background:#c4c4c4;"></div>
<div class="t" style="left:1056.00px;top:681.00px;font-size:7.0px;color:#b6b6b6;letter-spacing:0.031px;">100%</div>
<div class="a" style="left:885px;top:550px;width:200.00px;height:123.00px;background:#8e8e8e;border:1px solid #5c5c5c;border-bottom:none;border-radius:1.5px 0 0 0"></div>
<div class="a" style="left:885px;top:673px;width:194.00px;height:1.00px;background:#686868;"></div>
<div class="t" style="left:892.40px;top:564.00px;font-size:9.8px;color:#0b4226;letter-spacing:-0.337px;font-weight:bold;">Clipboard error</div>
<div class="a" style="left:1052px;top:557.5px;width:21.00px;height:20.50px;background:transparent;border:1px solid #2c2c2c;border-radius:3px"></div>
<svg style="left:1058.5px;top:564px" width="8" height="8" viewBox="0 0 8 8" fill="none" stroke="#222" stroke-width="0.8"><path d="M0.8 0.8l6.4 6.4M7.2 0.8L0.8 7.2"/></svg>
<svg style="left:893.4px;top:589.8px" width="19" height="18.6" viewBox="0 0 19 18.6" ><path d="M9.5 1L18.2 17.6H0.8z" fill="#dba52c" stroke="#8a6a1c" stroke-width="0.8" stroke-linejoin="round"/><path d="M9.5 6.5v6.5" stroke="#222" stroke-width="1.1"/></svg>
<div class="t" style="left:919.30px;top:591.00px;font-size:7.8px;color:#222;letter-spacing:0.082px;">We couldn&#x27;t copy the content to the</div>
<div class="t" style="left:919.30px;top:601.00px;font-size:7.8px;color:#222;letter-spacing:-0.014px;">clipboard because it&#x27;s in use by another</div>
<div class="t" style="left:919.30px;top:612.00px;font-size:7.8px;color:#222;letter-spacing:-0.000px;">application. You can still paste your content</div>
<div class="t" style="left:919.30px;top:622.00px;font-size:7.8px;color:#222;letter-spacing:0.131px;">within this workbook, but it won&#x27;t be</div>
<div class="t" style="left:919.30px;top:633.00px;font-size:7.8px;color:#222;letter-spacing:-0.009px;">available in other applications.</div>
<div class="a" style="left:1002.3px;top:651.4px;width:70.30px;height:15.60px;background:#919191;border:1px solid #6a6a6a;border-radius:2.5px"></div>
<div class="t" style="left:1007.40px;top:656.00px;font-size:7.9px;color:#1c1c1c;letter-spacing:-0.033px;">Don&#x27;t show again</div>
</body></html>
